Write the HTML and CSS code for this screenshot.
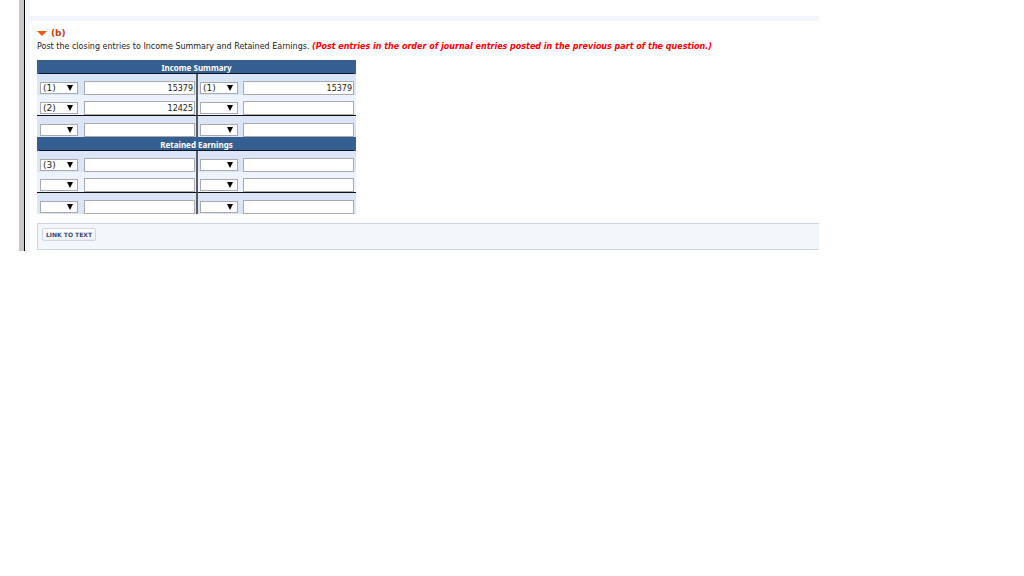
FILE: index.html
```
<!DOCTYPE html>
<html lang="en">
<head>
  <meta charset="UTF-8" />
  <meta name="viewport" content="width=device-width, initial-scale=1.0"/>
  <title>Closing Entries</title>
  <link rel="stylesheet" href="styles.css">
</head>
<body>

  <main class="page">
    <div class="divider"></div>

    <section class="question">
      <h2><span class="arrow"></span>(b)</h2>
      <p>Post the closing entries to Income Summary and Retained Earnings. <em>(Post entries in the order of journal entries posted in the previous part of the question.)</em></p>

      <form>
        <table class="accounts">
          <colgroup><col class="entry-col"><col class="debit-col"><col class="credit-col"><col></colgroup>
          <thead>
            <tr><th colspan="4"><span>Income Summary</span></th></tr>
          </thead>
          <tbody>
            <tr>
              <td class="entry"><select aria-label="Income Summary debit entry 1"><option>(1)</option><option>(2)</option><option>(3)</option></select></td>
              <td class="debit"><input type="text" value="15379" aria-label="Income Summary debit amount 1"></td>
              <td class="entry"><select aria-label="Income Summary credit entry 1"><option>(1)</option><option>(2)</option><option>(3)</option></select></td>
              <td><input type="text" value="15379" aria-label="Income Summary credit amount 1"></td>
            </tr>
            <tr class="total-line">
              <td class="entry"><select aria-label="Income Summary debit entry 2"><option>(2)</option><option>(1)</option><option>(3)</option></select></td>
              <td class="debit"><input type="text" value="12425" aria-label="Income Summary debit amount 2"></td>
              <td class="entry"><select aria-label="Income Summary credit entry 2"><option></option><option>(1)</option><option>(2)</option></select></td>
              <td><input type="text" aria-label="Income Summary credit amount 2"></td>
            </tr>
            <tr>
              <td class="entry"><select aria-label="Income Summary debit balance entry"><option></option><option>Bal.</option></select></td>
              <td class="debit"><input type="text" aria-label="Income Summary debit balance"></td>
              <td class="entry"><select aria-label="Income Summary credit balance entry"><option></option><option>Bal.</option></select></td>
              <td><input type="text" aria-label="Income Summary credit balance"></td>
            </tr>
          </tbody>
        </table>

        <table class="accounts">
          <colgroup><col class="entry-col"><col class="debit-col"><col class="credit-col"><col></colgroup>
          <thead>
            <tr><th colspan="4"><span>Retained Earnings</span></th></tr>
          </thead>
          <tbody>
            <tr>
              <td class="entry"><select aria-label="Retained Earnings debit entry 1"><option>(3)</option><option>(1)</option><option>(2)</option></select></td>
              <td class="debit"><input type="text" aria-label="Retained Earnings debit amount 1"></td>
              <td class="entry"><select aria-label="Retained Earnings credit entry 1"><option></option><option>(1)</option><option>(2)</option></select></td>
              <td><input type="text" aria-label="Retained Earnings credit amount 1"></td>
            </tr>
            <tr class="total-line">
              <td class="entry"><select aria-label="Retained Earnings debit entry 2"><option></option><option>(1)</option><option>(2)</option></select></td>
              <td class="debit"><input type="text" aria-label="Retained Earnings debit amount 2"></td>
              <td class="entry"><select aria-label="Retained Earnings credit entry 2"><option></option><option>(1)</option><option>(2)</option></select></td>
              <td><input type="text" aria-label="Retained Earnings credit amount 2"></td>
            </tr>
            <tr>
              <td class="entry"><select aria-label="Retained Earnings debit balance entry"><option></option><option>Bal.</option></select></td>
              <td class="debit"><input type="text" aria-label="Retained Earnings debit balance"></td>
              <td class="entry"><select aria-label="Retained Earnings credit balance entry"><option></option><option>Bal.</option></select></td>
              <td><input type="text" aria-label="Retained Earnings credit balance"></td>
            </tr>
          </tbody>
        </table>
      </form>

      <div class="links">
        <button type="button">LINK TO TEXT</button>
      </div>
    </section>
  </main>

</body>
</html>
```
FILE: styles.css
```
* {
  box-sizing: border-box;
}

body {
  margin: 0;
  background: white;
  font-family: Verdana, "DejaVu Sans", sans-serif;
  font-size: 8px;
  color: #222;
}

/* grey frame, black edge and pale gutter down the left side */
.page {
  margin: 0 20% 0 19px;
  padding: 16px 0 1px 6px;
  border-left: 5px solid #c8c6c6;
  background: linear-gradient(to right, #000 1px, #f3f7fb 1px, #f3f7fb 6px, white 6px);
}

.divider {
  height: 5px;
  background: #f3f7fb;
}

.question {
  padding: 6px 0 0 7px;
}

.question h2 {
  display: flex;
  align-items: center;
  gap: 4px;
  margin: 0;
  font-size: 9px;
  line-height: 12px;
  color: #c8400f;
}

.arrow {
  border: 5px solid transparent;
  border-top-color: #f4560f;
  border-bottom: 0;
}

.question p {
  margin: 3px 0 8px;
  line-height: 10px;
}

.question em {
  font-weight: bold;
  color: #f00;
}

.accounts {
  width: 319px;
  border-spacing: 0;
  table-layout: fixed;
}

.entry-col {
  width: 44px;
}

.debit-col {
  width: 117px;
}

.credit-col {
  width: 42px;
}

.accounts th {
  height: 14px;
  padding: 1px 2px 0;
  background: #365f91;
  color: white;
  font-family: Tahoma, "Noto Sans", sans-serif;
  line-height: 11px;
}

.accounts th span {
  display: block;
  height: 12px;
  border-bottom: 1px solid #0b1522;
}

.accounts td {
  height: 21px;
  padding: 7px 2px 0 3px;
  background: #dae5f7;
  vertical-align: top;
}

.accounts .total-line td {
  padding-top: 6px;
  background: #edf3fe;
  border-bottom: 1px solid #111;
}

.accounts .debit {
  padding-right: 1px;
  border-right: 2px solid #555c69;
}

.accounts .debit + .entry {
  padding-left: 2px;
}

select,
input {
  display: block;
  width: 100%;
  margin: 0;
  border: 1px solid #aaa;
  border-radius: 0;
  font: inherit;
  color: #222;
}

select {
  width: 38px;
  height: 12px;
  margin-top: 1px;
  padding: 0 2px;
  font-size: 9px;
  line-height: 10px;
  appearance: none;
  background: white url("data:image/svg+xml,%3Csvg xmlns='http://www.w3.org/2000/svg' width='6' height='6'%3E%3Cpath d='M0 0h6L3 6z'/%3E%3C/svg%3E") no-repeat right 4px top 2px;
}

input {
  height: 14px;
  padding: 0 1px;
  background: white;
  line-height: 12px;
  text-align: right;
}

.links {
  margin-top: 9px;
  padding: 4px 4px 8px;
  border: 1px solid #ccd4df;
  border-right: 0;
  background: #f3f7fb;
}

.links button {
  display: block;
  height: 13px;
  padding: 0 3px;
  border: 1px solid #cfd6e2;
  border-radius: 2px;
  background: linear-gradient(#fff, #edf1f7);
  font-family: inherit;
  font-size: 6px;
  font-weight: bold;
  line-height: 11px;
  color: #34487c;
  cursor: pointer;
}
```
